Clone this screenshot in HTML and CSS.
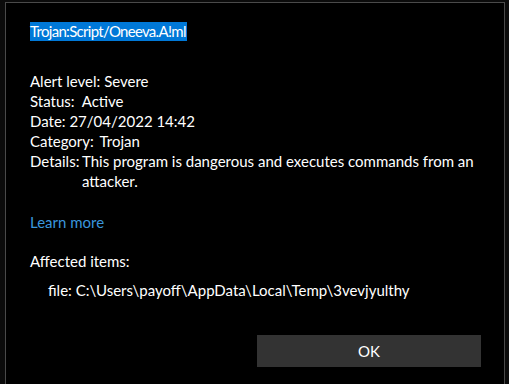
FILE: index.html
```html
<!DOCTYPE html>
<html>
<head>
<meta charset="utf-8">
<link rel="stylesheet" href="styles.css">
</head>
<body>
<div class="dialog">
  <div class="title"><span class="sel">Trojan:Script/Oneeva.A!ml</span></div>
  <div class="info">
    <div class="line">Alert level: Severe</div>
    <div class="line">Status:&nbsp; Active</div>
    <div class="line">Date: 27/04/2022 14:42</div>
    <div class="line">Category: <span class="gap">Trojan</span></div>
    <div class="details">
      <span class="label">Details:</span>
      <span class="value">This program is dangerous and executes commands from an attacker.</span>
    </div>
  </div>
  <a class="learn">Learn more</a>
  <div class="affected">Affected items:</div>
  <div class="file">file: C:\Users\payoff\AppData\Local\Temp\3vevjyulthy</div>
  <div class="actions"><button class="ok">OK</button></div>
</div>
</body>
</html>
```
FILE: styles.css
```css
html, body {
  margin: 0;
  padding: 0;
  background: #0b0b0b;
  height: 100%;
  overflow: hidden;
}
body {
  font-family: "Lato", "Noto Sans", sans-serif;
  color: #ffffff;
  font-size: 15px;
}
.dialog {
  margin: 2px 0 0 5px;
  width: 500px;
  height: 400px;
  border: 1px solid #4a4a4a;
  border-bottom: none;
  background: #000;
  padding: 19px 0 0 24px;
  box-sizing: border-box;
}
.title {
  line-height: 19px;
  height: 19px;
}
.sel {
  background: #0078d7;
  color: #fff;
  display: inline-block;
  height: 19px;
  letter-spacing: -0.7px;
  padding-right: 1px;
}
.info {
  margin-top: 30px;
}
.line, .details {
  line-height: 20px;
}
.gap {
  margin-left: 2px;
}
.details {
  display: flex;
}
.details .label {
  flex: none;
  width: 52px;
}
.details .value {
  width: 410px;
}
.learn {
  display: block;
  color: #3a96dd;
  margin-top: 21px;
  line-height: 20px;
}
.affected {
  margin-top: 19px;
  line-height: 20px;
}
.file {
  margin-top: 9px;
  padding-left: 18px;
  line-height: 20px;
}
.actions {
  display: flex;
  justify-content: flex-end;
  padding-right: 23px;
  margin-top: 35px;
}
.ok {
  width: 224px;
  height: 32px;
  border: none;
  background: #333333;
  color: #fff;
  font-family: inherit;
  font-size: 15px;
}
```
